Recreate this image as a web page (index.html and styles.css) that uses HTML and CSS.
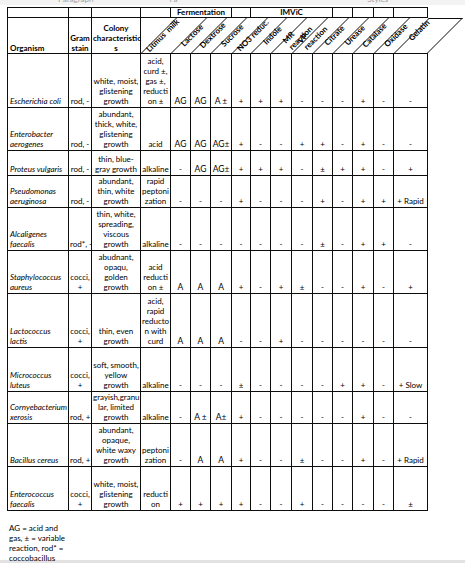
FILE: index.html
```html
<!DOCTYPE html>
<html>
<head>
<meta charset="utf-8">
<title>Biochemical tests</title>
<link rel="stylesheet" href="styles.css">
</head>
<body>
<div class="page">
  <div class="ribbon"><span class="rb1">Paragraph</span><span class="rb2">Fa</span><span class="rb3">Styles</span></div>
  <table class="grid">
    <colgroup>
      <col class="w61"><col class="w23"><col class="w49"><col class="w30">
      <col class="w20"><col class="w20"><col class="w21"><col class="w19">
      <col class="w20"><col class="w21"><col class="w21"><col class="w20">
      <col class="w20"><col class="w21"><col class="w20"><col class="w34">
    </colgroup>
    <tr class="top">
      <td></td><td></td><td></td><td></td>
      <th colspan="3">Fermentation</th>
      <td></td>
      <th colspan="4">IMViC</th>
      <td></td><td></td><td></td><td></td>
    </tr>
    <tr class="heads">
      <th class="org">Organism</th>
      <th>Gram<br>stain</th>
      <th>Colony<br>characteristic<br>s</th>
      <th class="sl"><div class="sk"><div class="an"><span>Litmus&nbsp; milk</span></div></div></th>
      <th class="sl"><div class="sk"><div class="an"><span>Lactose</span></div></div></th>
      <th class="sl"><div class="sk"><div class="an"><span>Dextrose</span></div></div></th>
      <th class="sl"><div class="sk"><div class="an"><span>Sucrose</span></div></div></th>
      <th class="sl"><div class="sk"><div class="an"><span>NO3 reduc.</span></div></div></th>
      <th class="sl"><div class="sk"><div class="an"><span>Indole</span></div></div></th>
      <th class="sl"><div class="sk"><div class="an two-a"><span>MR<br>reaction</span></div></div></th>
      <th class="sl"><div class="sk"><div class="an two-b"><span>VP<br>reaction</span></div></div></th>
      <th class="sl"><div class="sk"><div class="an"><span>Citrate</span></div></div></th>
      <th class="sl"><div class="sk"><div class="an"><span>Urease</span></div></div></th>
      <th class="sl"><div class="sk"><div class="an"><span>Catalase</span></div></div></th>
      <th class="sl"><div class="sk"><div class="an"><span>Oxidase</span></div></div></th>
      <th class="sl"><div class="sk last"><div class="an wide"><span>Gelatin</span></div></div></th>
    </tr>
    <tr class="h54">
      <td class="org">Escherichia coli</td><td>rod, -</td>
      <td>white, moist,<br>glistening<br>growth</td>
      <td>acid,<br>curd ±,<br>gas ±,<br>reducti<br>on ±</td>
      <td class="big">AG</td><td class="big">AG</td><td class="big">A ±</td>
      <td>+</td><td>+</td><td>+</td><td>-</td><td>-</td><td>-</td><td>+</td><td>-</td><td>-</td>
    </tr>
    <tr class="h43">
      <td class="org">Enterobacter<br>aerogenes</td><td>rod, -</td>
      <td>abundant,<br>thick, white,<br>glistening<br>growth</td>
      <td>acid</td>
      <td class="big">AG</td><td class="big">AG</td><td class="big">AG±</td>
      <td>+</td><td>-</td><td>-</td><td>+</td><td>+</td><td>-</td><td>+</td><td>-</td><td>-</td>
    </tr>
    <tr class="h25">
      <td class="org">Proteus vulgaris</td><td>rod, -</td>
      <td>thin, blue-<br>gray growth</td>
      <td>alkaline</td>
      <td>-</td><td class="big">AG</td><td class="big">AG±</td>
      <td>+</td><td>+</td><td>+</td><td>-</td><td>±</td><td>+</td><td>+</td><td>-</td><td>+</td>
    </tr>
    <tr class="h32">
      <td class="org">Pseudomonas<br>aeruginosa</td><td>rod, -</td>
      <td>abundant,<br>thin, white<br>growth</td>
      <td>rapid<br>peptoni<br>zation</td>
      <td>-</td><td>-</td><td>-</td>
      <td>+</td><td>-</td><td>-</td><td>-</td><td>+</td><td>-</td><td>+</td><td>+</td><td>+ Rapid</td>
    </tr>
    <tr class="h43">
      <td class="org">Alcaligenes<br>faecalis</td><td>rod*, -</td>
      <td>thin, white,<br>spreading,<br>viscous<br>growth</td>
      <td>alkaline</td>
      <td>-</td><td>-</td><td>-</td>
      <td>-</td><td>-</td><td>-</td><td>-</td><td>±</td><td>-</td><td>+</td><td>+</td><td>-</td>
    </tr>
    <tr class="h43">
      <td class="org">Staphylococcus<br>aureus</td><td>cocci,<br>+</td>
      <td>abudnant,<br>opaqu,<br>golden<br>growth</td>
      <td>acid<br>reducti<br>on ±</td>
      <td class="big">A</td><td class="big">A</td><td class="big">A</td>
      <td>+</td><td>-</td><td>+</td><td>±</td><td>-</td><td>-</td><td>+</td><td>-</td><td>+</td>
    </tr>
    <tr class="h54">
      <td class="org">Lactococcus<br>lactis</td><td>cocci,<br>+</td>
      <td>thin, even<br>growth</td>
      <td>acid,<br>rapid<br>reducto<br>n with<br>curd</td>
      <td class="big">A</td><td class="big">A</td><td class="big">A</td>
      <td>-</td><td>-</td><td>+</td><td>-</td><td>-</td><td>-</td><td>-</td><td>-</td><td>-</td>
    </tr>
    <tr class="h44">
      <td class="org">Micrococcus<br>luteus</td><td>cocci,<br>+</td>
      <td>soft, smooth,<br>yellow<br>growth</td>
      <td>alkaline</td>
      <td>-</td><td>-</td><td>-</td>
      <td>±</td><td>-</td><td>-</td><td>-</td><td>-</td><td>+</td><td>+</td><td>-</td><td>+ Slow</td>
    </tr>
    <tr class="h32">
      <td class="org">Cornyebacterium<br>xerosis</td><td>rod, +</td>
      <td>grayish,granu<br>lar, limited<br>growth</td>
      <td>alkaline</td>
      <td>-</td><td class="big">A ±</td><td class="big">A±</td>
      <td>+</td><td>-</td><td>-</td><td>-</td><td>-</td><td>-</td><td>+</td><td>-</td><td>-</td>
    </tr>
    <tr class="h43">
      <td class="org">Bacillus cereus</td><td>rod, +</td>
      <td>abundant,<br>opaque,<br>white waxy<br>growth</td>
      <td>peptoni<br>zation</td>
      <td>-</td><td class="big">A</td><td class="big">A</td>
      <td>+</td><td>-</td><td>-</td><td>±</td><td>-</td><td>-</td><td>+</td><td>-</td><td>+ Rapid</td>
    </tr>
    <tr class="h44">
      <td class="org">Enterococcus<br>faecalis</td><td>cocci,<br>+</td>
      <td>white, moist,<br>glistening<br>growth</td>
      <td>reducti<br>on</td>
      <td>+</td><td>+</td><td>+</td>
      <td>+</td><td>-</td><td>-</td><td>+</td><td>-</td><td>-</td><td>-</td><td>-</td><td>±</td>
    </tr>
  </table>
  <p class="note">AG = acid and<br>gas, ± = variable<br>reaction, rod* =<br>coccobacillus</p>
  <div class="rule"></div>
</div>
</body>
</html>
```

FILE: styles.css
```css
* { box-sizing: border-box; }
html, body { margin: 0; padding: 0; background: #fff; }
body {
  font-family: Lato, "Liberation Sans", sans-serif;
  font-size: 8px;
  line-height: 10px;
  color: #000;
}
.page { width: 474px; height: 565px; overflow: hidden; }

.ribbon {
  width: 465px; height: 5px; overflow: hidden;
  background: #f3f3f3; display: flex;
  color: #a0a0a0; font-size: 8px; line-height: 8px;
}
.ribbon span { margin-top: -5px; }
.rb1 { margin-left: 58px; }
.rb2 { margin-left: 76px; }
.rb3 { margin-left: 190px; }

.grid {
  margin: 2px 0 0 7px;
  border-collapse: collapse;
  table-layout: fixed;
  width: 420px;
}
.w61 { width: 61px; } .w23 { width: 23px; } .w49 { width: 49px; }
.w30 { width: 30px; } .w20 { width: 20px; } .w21 { width: 21px; }
.w19 { width: 19px; } .w34 { width: 34px; }

.grid td, .grid th {
  border: 1px solid #0d0d0d;
  padding: 0 1px 1px;
  vertical-align: bottom;
  text-align: center;
  white-space: nowrap;
  font-weight: normal;
}
.grid th { font-weight: bold; }
.grid .org { text-align: left; padding-left: 2px; }
.grid td.org { font-style: italic; }
.grid td.big { font-size: 8.5px; }

tr.top td, tr.top th { height: 10px; line-height: 9px; padding: 0; vertical-align: middle; }
tr.heads th { padding-bottom: 0; }
tr.h25 td { height: 25px; }
tr.h32 td { height: 32px; }
tr.h43 td { height: 43px; }
tr.h44 td { height: 44px; }
tr.h54 td { height: 54px; }

.grid th.sl { border-left: none; border-right: none; padding: 0; text-align: left; }
.sk {
  height: 35px;
  border-left: 1px solid #0d0d0d;
  transform: skewX(-45deg);
  transform-origin: bottom left;
  display: flex;
  align-items: flex-start;
}
.sk.last { border-right: 1px solid #0d0d0d; border-top: 1px solid #0d0d0d; }
.an {
  width: 0; height: 0;
  margin-left: 3px; margin-top: 17px;
  display: flex; justify-content: center; align-items: center;
}
.an.two-a { margin-left: 8px; }
.an.two-b { margin-left: 2px; }
.an.wide { margin-left: 2px; margin-top: 11px; }
.an span {
  flex: none;
  white-space: nowrap;
  line-height: 9px;
  text-align: left;
  transform: skewX(45deg) rotate(-45deg);
}

.note { margin: 12px 0 0 9px; line-height: 10px; height: 40px; }
.rule { width: 465px; height: 3px; margin-top: -3px; background: #e2e2e2; }
```
